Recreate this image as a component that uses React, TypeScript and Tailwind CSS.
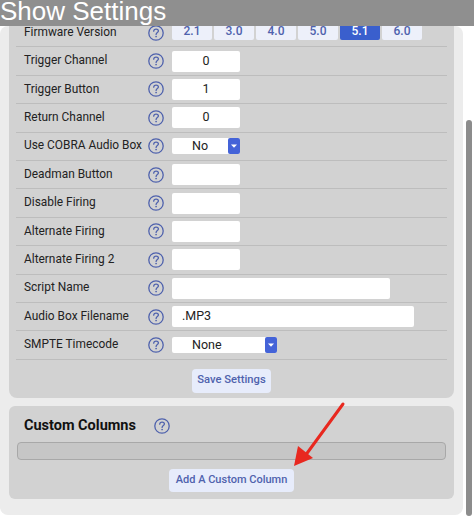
import React from 'react';

const ROWS_TOP = [
  { label: 'Trigger Channel', value: '0' },
  { label: 'Trigger Button', value: '1' },
  { label: 'Return Channel', value: '0' },
];
const ROWS_MID = ['Deadman Button', 'Disable Firing', 'Alternate Firing', 'Alternate Firing 2'];
const VERSIONS = ['2.1', '3.0', '4.0', '5.0', '5.1', '6.0'];

function Help() {
  return (
    <svg width="16" height="16" viewBox="0 0 16 16" fill="none" className="shrink-0">
      <circle cx="8" cy="8" r="7.2" stroke="#4f62ad" strokeWidth="1.3" />
      <path
        d="M5.7 6.2C5.8 4.9 6.8 4.1 8.1 4.1C9.4 4.1 10.4 4.9 10.4 6C10.4 7.5 8.1 7.6 8.1 9.4"
        stroke="#4f62ad"
        strokeWidth="1.3"
        strokeLinecap="round"
      />
      <circle cx="8.1" cy="11.5" r="0.85" fill="#4f62ad" />
    </svg>
  );
}

function Row({ label, children }: { label: string; children?: React.ReactNode }) {
  return (
    <div className="h-[28.4px] flex items-center border-b border-[#bdbdbd] pl-[8px]">
      <span className="w-[124px] shrink-0 text-[11.9px] text-[#222] whitespace-nowrap">{label}</span>
      <Help />
      <div className="ml-[8px] flex items-center">{children}</div>
    </div>
  );
}

function TextBox({ width = 'w-[68px]', value = '' }: { width?: string; value?: string }) {
  return (
    <div className={`${width} h-[21px] bg-white rounded-[2px] text-[12.5px] text-[#222] flex items-center justify-center`}>
      {value}
    </div>
  );
}

function Select({ value, width }: { value: string; width: string }) {
  return (
    <div className={`${width} h-[16px] bg-white rounded-[2px] flex items-center text-[12.5px] text-[#222]`}>
      <span className="pl-[20px] flex-1">{value}</span>
      <span className="w-[12px] h-full bg-[#4463d8] rounded-[2px] flex items-center justify-center">
        <svg width="6" height="4" viewBox="0 0 6 4">
          <path d="M0 0.5H6L3 3.8Z" fill="#fff" />
        </svg>
      </span>
    </div>
  );
}

export default function App() {
  return (
    <div className="relative w-[474px] h-[516px] bg-white overflow-hidden font-['Roboto','Liberation_Sans',sans-serif]">
      {/* title bar sits over the scrolled content */}
      <div className="absolute top-0 left-0 right-0 h-[26px] bg-[#8f8f8f] z-10">
        <div className="font-['Liberation_Sans',sans-serif] text-[26px] leading-[22px] text-white whitespace-nowrap">Show Settings</div>
      </div>

      <div className="flex h-full pt-[26px]">
        <div className="w-[463px] h-[489px] bg-[#ececec] rounded-[8px] overflow-hidden px-[9px]">
          <div className="-mt-[7px] bg-[#d2d2d2] rounded-b-[8px] px-[7px] pb-[7px] h-[379px]">
            <Row label="Firmware Version">
              <div className="flex gap-[2px] -mt-[3px]">
                {VERSIONS.map(v => (
                  <div
                    key={v}
                    className={`w-[40px] h-[17px] flex items-center justify-center text-[12px] font-medium rounded-b-[2px] ${
                      v === '5.1' ? 'bg-[#3a5fcd] text-white' : 'bg-[#edf0fa] text-[#4f62ad]'
                    }`}
                  >
                    {v}
                  </div>
                ))}
              </div>
            </Row>
            {ROWS_TOP.map(r => (
              <Row key={r.label} label={r.label}>
                <TextBox value={r.value} />
              </Row>
            ))}
            <Row label="Use COBRA Audio Box">
              <Select value="No" width="w-[68px]" />
            </Row>
            {ROWS_MID.map(l => (
              <Row key={l} label={l}>
                <TextBox />
              </Row>
            ))}
            <Row label="Script Name">
              <TextBox width="w-[218px]" />
            </Row>
            <Row label="Audio Box Filename">
              <div className="w-[242px] h-[21px] bg-white rounded-[2px] text-[12.5px] text-[#222] flex items-center pl-[10px]">.MP3</div>
            </Row>
            <Row label="SMPTE Timecode">
              <Select value="None" width="w-[105px]" />
            </Row>
            <div className="flex justify-center pt-[9px]">
              <button className="w-[79px] h-[24px] bg-[#e7ecfb] rounded-[4px] text-[11.2px] font-medium text-[#4f62ad] whitespace-nowrap">
                Save Settings
              </button>
            </div>
          </div>

          <div className="mt-[8px] h-[93px] bg-[#d2d2d2] rounded-[6px] px-[8px]">
            <div className="h-[36px] pt-[4px] flex items-center pl-[7px]">
              <span className="text-[14.5px] font-bold text-[#111] w-[130px] whitespace-nowrap">Custom Columns</span>
              <Help />
            </div>
            <div className="h-[18px] bg-[#c6c6c6] border border-[#a8a8a8] rounded-[4px]" />
            <div className="flex justify-center mt-[9px]">
              <button className="w-[125px] h-[23px] bg-[#e7ecfb] rounded-[4px] text-[11px] font-medium text-[#4f62ad] whitespace-nowrap">
                Add A Custom Column
              </button>
            </div>
          </div>
        </div>

        {/* scrollbar */}
        <div className="flex-1 pl-[3px] pr-[2px] pt-[94px]">
          <div className="h-full bg-[#8c8c8c] rounded-full" />
        </div>
      </div>

      {/* annotation arrow */}
      <svg className="absolute left-0 top-0 z-20 pointer-events-none" width="474" height="516" viewBox="0 0 474 516">
        <path d="M343 404L305 456" stroke="#e8281f" strokeWidth="3" strokeLinecap="round" />
        <path d="M294 466L298 446L313 458Z" fill="#e8281f" />
      </svg>
    </div>
  );
}
